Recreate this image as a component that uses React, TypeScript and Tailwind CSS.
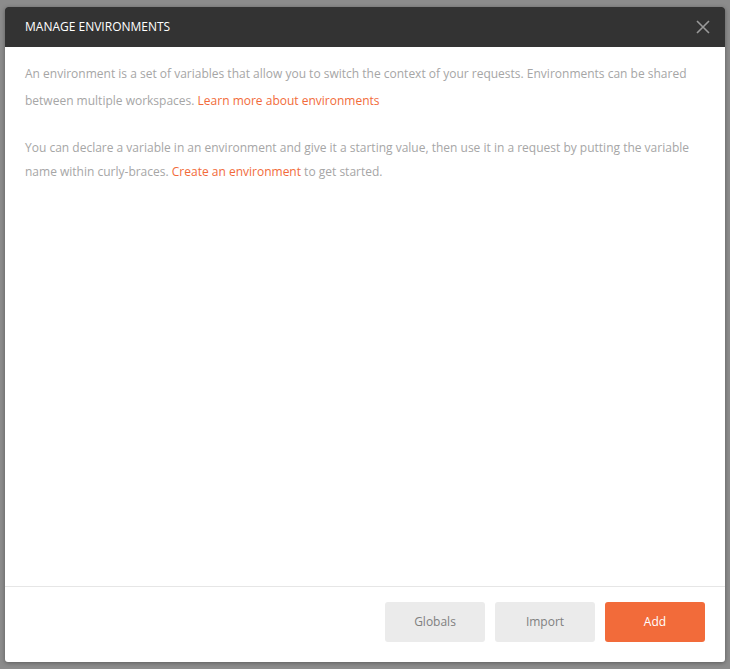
export default function App() {
  return (
    <div className="h-[669px] w-[730px] bg-[#8c8c8c] pt-[7px] pl-[5px] font-['Open_Sans',sans-serif]">
      <div className="flex h-[655px] w-[720px] flex-col overflow-hidden rounded-[3px] bg-white shadow-[0_1px_4px_rgba(0,0,0,0.35)]">
        {/* Header */}
        <div className="flex h-[40px] shrink-0 items-center justify-between bg-[#333333] pl-[20px] pr-[12px]">
          <h1 className="text-[12px] text-white">MANAGE ENVIRONMENTS</h1>
          <button className="flex h-[20px] w-[20px] items-center justify-center">
            <svg width="14" height="14" viewBox="0 0 14 14" fill="none" stroke="#9a9a9a" strokeWidth="1.6">
              <path d="M1 1L13 13M13 1L1 13" />
            </svg>
          </button>
        </div>

        {/* Body */}
        <div className="flex-1 px-[20px] text-[12px] text-[#a6a6a6]">
          <p className="mt-[13px] leading-[27px]">
            An environment is a set of variables that allow you to switch the context of your requests. Environments can be shared
            between multiple workspaces. <span className="text-[#f26b3a]">Learn more about environments</span>
          </p>
          <p className="mt-[22px] leading-[24px]">
            You can declare a variable in an environment and give it a starting value, then use it in a request by putting the variable
            name within curly-braces. <span className="text-[#f26b3a]">Create an environment</span> to get started.
          </p>
        </div>

        {/* Footer */}
        <div className="flex shrink-0 justify-end gap-[10px] border-t border-[#e6e6e6] px-[20px] pt-[15px] pb-[20px]">
          <button className="h-[40px] w-[100px] rounded-[3px] bg-[#ebebeb] text-[12px] text-[#808080]">Globals</button>
          <button className="h-[40px] w-[100px] rounded-[3px] bg-[#ebebeb] text-[12px] text-[#808080]">Import</button>
          <button className="h-[40px] w-[100px] rounded-[3px] bg-[#f26b3a] text-[12px] text-white">Add</button>
        </div>
      </div>
    </div>
  )
}
